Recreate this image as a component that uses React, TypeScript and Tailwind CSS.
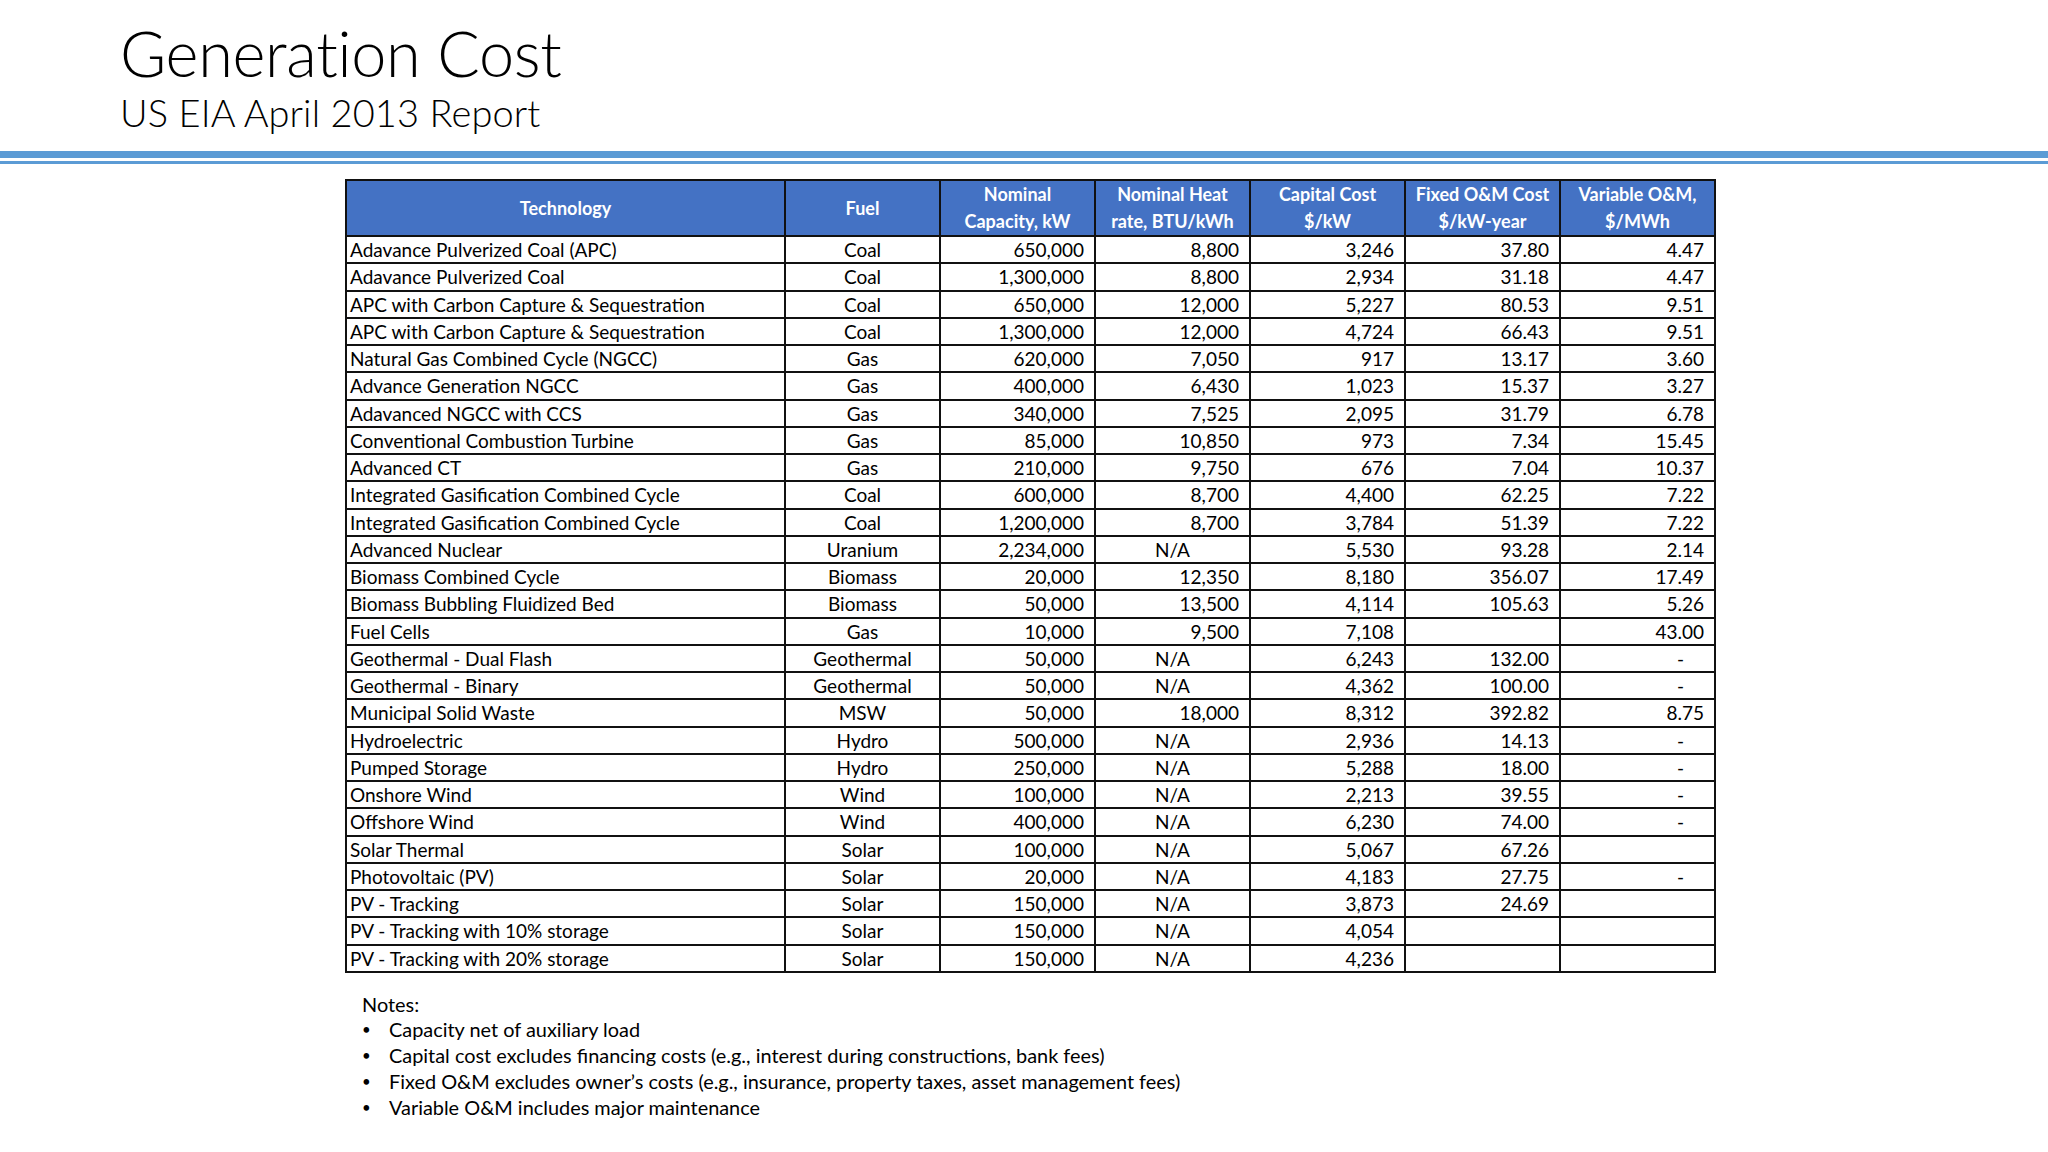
import React from 'react';

type Row = [string, string, string, string, string, string, string];

const rows: Row[] = [
  ['Adavance Pulverized Coal (APC)', 'Coal', '650,000', '8,800', '3,246', '37.80', '4.47'],
  ['Adavance Pulverized Coal', 'Coal', '1,300,000', '8,800', '2,934', '31.18', '4.47'],
  ['APC with Carbon Capture & Sequestration', 'Coal', '650,000', '12,000', '5,227', '80.53', '9.51'],
  ['APC with Carbon Capture & Sequestration', 'Coal', '1,300,000', '12,000', '4,724', '66.43', '9.51'],
  ['Natural Gas Combined Cycle (NGCC)', 'Gas', '620,000', '7,050', '917', '13.17', '3.60'],
  ['Advance Generation NGCC', 'Gas', '400,000', '6,430', '1,023', '15.37', '3.27'],
  ['Adavanced NGCC with CCS', 'Gas', '340,000', '7,525', '2,095', '31.79', '6.78'],
  ['Conventional Combustion Turbine', 'Gas', '85,000', '10,850', '973', '7.34', '15.45'],
  ['Advanced CT', 'Gas', '210,000', '9,750', '676', '7.04', '10.37'],
  ['Integrated Gasification Combined Cycle', 'Coal', '600,000', '8,700', '4,400', '62.25', '7.22'],
  ['Integrated Gasification Combined Cycle', 'Coal', '1,200,000', '8,700', '3,784', '51.39', '7.22'],
  ['Advanced Nuclear', 'Uranium', '2,234,000', 'N/A', '5,530', '93.28', '2.14'],
  ['Biomass Combined Cycle', 'Biomass', '20,000', '12,350', '8,180', '356.07', '17.49'],
  ['Biomass Bubbling Fluidized Bed', 'Biomass', '50,000', '13,500', '4,114', '105.63', '5.26'],
  ['Fuel Cells', 'Gas', '10,000', '9,500', '7,108', '', '43.00'],
  ['Geothermal - Dual Flash', 'Geothermal', '50,000', 'N/A', '6,243', '132.00', '-'],
  ['Geothermal - Binary', 'Geothermal', '50,000', 'N/A', '4,362', '100.00', '-'],
  ['Municipal Solid Waste', 'MSW', '50,000', '18,000', '8,312', '392.82', '8.75'],
  ['Hydroelectric', 'Hydro', '500,000', 'N/A', '2,936', '14.13', '-'],
  ['Pumped Storage', 'Hydro', '250,000', 'N/A', '5,288', '18.00', '-'],
  ['Onshore Wind', 'Wind', '100,000', 'N/A', '2,213', '39.55', '-'],
  ['Offshore Wind', 'Wind', '400,000', 'N/A', '6,230', '74.00', '-'],
  ['Solar Thermal', 'Solar', '100,000', 'N/A', '5,067', '67.26', ''],
  ['Photovoltaic (PV)', 'Solar', '20,000', 'N/A', '4,183', '27.75', '-'],
  ['PV - Tracking', 'Solar', '150,000', 'N/A', '3,873', '24.69', ''],
  ['PV - Tracking with 10% storage', 'Solar', '150,000', 'N/A', '4,054', '', ''],
  ['PV - Tracking with 20% storage', 'Solar', '150,000', 'N/A', '4,236', '', ''],
];

const notes = [
  'Capacity net of auxiliary load',
  'Capital cost excludes financing costs (e.g., interest during constructions, bank fees)',
  'Fixed O&M excludes owner\u2019s costs (e.g., insurance, property taxes, asset management fees)',
  'Variable O&M includes major maintenance',
];

const cell = 'border-2 border-[#111] p-0 align-middle';

const App: React.FC = () => {
  return (
    <div className="w-[2048px] h-[1152px] overflow-hidden bg-white text-black font-['Lato','Liberation_Sans',sans-serif]">
      {/* Title */}
      <div className="pl-[120px] pt-[21px]">
        <h1 className="text-[63px] leading-[63px] font-light tracking-[-0.3px]">Generation Cost</h1>
        <h2 className="mt-[9px] text-[38px] leading-[38px] font-light tracking-[0.1px]">US EIA April 2013 Report</h2>
      </div>

      {/* Rule lines */}
      <div className="mt-[20px] h-[7px] bg-[#5b9bd5]" />
      <div className="mt-[3px] h-[3px] bg-[#5b9bd5]" />

      {/* Table */}
      <table className="mt-[15px] ml-[345px] border-collapse table-fixed w-[1369px] text-[19px] leading-none">
        <colgroup>
          <col className="w-[439px]" />
          <col className="w-[155px]" />
          <col className="w-[155px]" />
          <col className="w-[155px]" />
          <col className="w-[155px]" />
          <col className="w-[155px]" />
          <col className="w-[155px]" />
        </colgroup>
        <thead>
          <tr className="h-[54px] bg-[#4472c4] text-white font-bold text-center text-[18px]">
            <th className={cell}>Technology</th>
            <th className={cell}>Fuel</th>
            <th className={`${cell} leading-[27px]`}>Nominal<br />Capacity, kW</th>
            <th className={`${cell} leading-[27px]`}>Nominal Heat<br />rate, BTU/kWh</th>
            <th className={`${cell} leading-[27px]`}>Capital Cost<br />$/kW</th>
            <th className={`${cell} leading-[27px] whitespace-nowrap`}>Fixed O&amp;M Cost<br />$/kW-year</th>
            <th className={`${cell} leading-[27px]`}>Variable O&amp;M,<br />$/MWh</th>
          </tr>
        </thead>
        <tbody>
          {rows.map((r, i) => (
            <tr key={i} className="h-[27.25px]">
              <td className={`${cell} pl-[3px] whitespace-nowrap`}>{r[0]}</td>
              <td className={`${cell} text-center`}>{r[1]}</td>
              <td className={`${cell} text-right pr-[10px]`}>{r[2]}</td>
              <td className={`${cell} ${r[3] === 'N/A' ? 'text-center' : 'text-right pr-[10px]'}`}>{r[3]}</td>
              <td className={`${cell} text-right pr-[10px]`}>{r[4]}</td>
              <td className={`${cell} text-right pr-[10px]`}>{r[5]}</td>
              <td className={`${cell} text-right ${r[6] === '-' ? 'pr-[30px]' : 'pr-[10px]'}`}>{r[6]}</td>
            </tr>
          ))}
        </tbody>
      </table>

      {/* Notes */}
      <div className="mt-[19px] ml-[362px] text-[19.9px] leading-[25.7px]">
        <div>Notes:</div>
        <ul>
          {notes.map((n) => (
            <li key={n} className="flex">
              <span className="w-[27px] shrink-0 text-[15px]">•</span>
              <span>{n}</span>
            </li>
          ))}
        </ul>
      </div>
    </div>
  );
};

export default App;
